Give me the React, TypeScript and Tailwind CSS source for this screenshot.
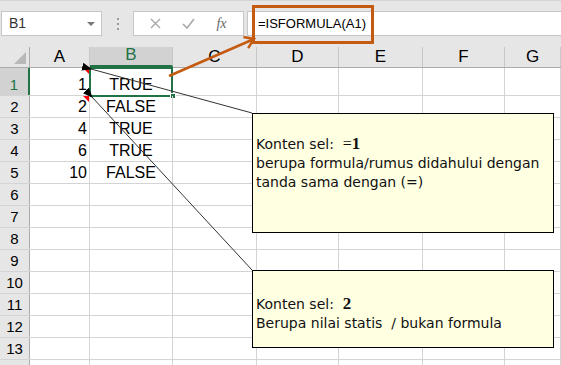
import React from 'react';

const cols = [
  { name: 'A', w: 'w-[60px]' },
  { name: 'B', w: 'w-[83px]' },
  { name: 'C', w: 'w-[84px]' },
  { name: 'D', w: 'w-[82px]' },
  { name: 'E', w: 'w-[84px]' },
  { name: 'F', w: 'w-[82px]' },
  { name: 'G', w: 'w-[56px]' },
];

const aVals = ['1', '2', '4', '6', '10'];
const bVals = ['TRUE', 'FALSE', 'TRUE', 'TRUE', 'FALSE'];

const rows = Array.from({ length: 14 }, (_, i) => i + 1);

const Toolbar = () => (
  <div className="h-[47px] bg-[#e6e6e6] border-t border-[#d4d4d4] flex items-start pt-[10px] pl-[1px]">
    <div className="w-[101px] h-[25px] bg-white border border-[#c6c6c6] flex items-center justify-between pl-[7px] pr-[6px]">
      <span className="text-[14px] text-[#333] font-['Liberation_Sans',sans-serif]">B1</span>
      <span className="w-0 h-0 border-l-[4px] border-r-[4px] border-t-[4px] border-l-transparent border-r-transparent border-t-[#777]" />
    </div>
    <div className="w-[31px] h-[25px] flex flex-col items-center justify-center gap-[3px]">
      <span className="w-[2px] h-[2px] bg-[#9a9a9a]" />
      <span className="w-[2px] h-[2px] bg-[#9a9a9a]" />
      <span className="w-[2px] h-[2px] bg-[#9a9a9a]" />
    </div>
    <div className="w-[111px] h-[25px] bg-white border border-[#c6c6c6] flex items-center justify-around px-[6px]">
      <svg width="11" height="11" viewBox="0 0 11 11">
        <path d="M1 1L10 10M10 1L1 10" stroke="#a8a8a8" strokeWidth="1.4" fill="none" />
      </svg>
      <svg width="13" height="11" viewBox="0 0 13 11">
        <path d="M1 6L5 10L12 1" stroke="#a8a8a8" strokeWidth="1.6" fill="none" />
      </svg>
      <span className="text-[14px] italic text-[#666] font-['Liberation_Serif',serif]">fx</span>
    </div>
    <div className="ml-[3px] flex-1 h-[25px] bg-white border border-[#c6c6c6] border-r-0 flex items-center pl-[10px]">
      <span className="text-[13px] text-black font-['Liberation_Sans',sans-serif]">=ISFORMULA(A1)</span>
    </div>
  </div>
);

const HeaderRow = () => (
  <div className="flex h-[21px] bg-[#e6e6e6] border-b border-[#ababab]">
    <div className="w-[30px] border-r border-[#ababab] relative">
      <svg className="absolute right-[3px] bottom-[3px]" width="12" height="12" viewBox="0 0 12 12">
        <path d="M12 0L12 12L0 12Z" fill="#b8b8b8" />
      </svg>
    </div>
    {cols.map((c) => (
      <div
        key={c.name}
        className={`${c.w} flex items-end justify-center text-[17px] leading-[20px] border-r border-[#c8c8c8] ${
          c.name === 'B' ? 'bg-[#d2d2d2] text-[#217346] border-b-2 border-b-[#217346]' : 'text-black'
        }`}
      >
        {c.name}
      </div>
    ))}
  </div>
);

const Row = ({ n }: { n: number }) => {
  const h = n === 1 ? 'h-[28px]' : 'h-[22px]';
  const sel = n === 1;
  return (
    <div className={`flex ${h} border-b border-[#d4d4d4]`}>
      <div
        className={`w-[30px] flex items-end justify-center pb-[1px] text-[15px] leading-[18px] ${
          sel ? 'bg-[#d2d2d2] text-[#217346] border-r-2 border-[#217346]' : 'bg-[#e6e6e6] text-black border-r border-[#ababab]'
        }`}
      >
        {n <= 13 ? n : ''}
      </div>
      {cols.map((c) => {
        let content: React.ReactNode = null;
        let align = 'justify-center';
        if (c.name === 'A' && n <= 5) {
          content = aVals[n - 1];
          align = 'justify-end pr-[2px]';
        }
        if (c.name === 'B' && n <= 5) content = bVals[n - 1];
        return (
          <div
            key={c.name}
            className={`${c.w} relative flex items-end ${align} pb-[1px] text-[16px] leading-[19px] text-black border-r border-[#d4d4d4]`}
          >
            {content}
            {c.name === 'A' && n <= 2 && (
              <svg className="absolute right-0 top-0" width="6" height="6" viewBox="0 0 6 6">
                <path d="M0 0L6 0L6 6Z" fill="#ff0000" />
              </svg>
            )}
            {c.name === 'B' && sel && (
              <>
                <span className="absolute left-[-1px] top-[-1px] right-[-1px] bottom-[-2px] border-2 border-[#217346]" />
                <span className="absolute right-[-4px] bottom-[-4px] w-[6px] h-[6px] bg-[#217346] border border-white" />
              </>
            )}
          </div>
        );
      })}
    </div>
  );
};

const Callout = ({ className, children }: { className: string; children: React.ReactNode }) => (
  <div
    className={`absolute left-[252px] w-[302px] bg-[#ffffe1] border border-black pl-[3px] text-[14px] leading-[19px] text-[#111] font-['DejaVu_Sans',sans-serif] ${className}`}
  >
    {children}
  </div>
);

export default function App() {
  return (
    <div className="relative w-[561px] h-[365px] overflow-hidden bg-white font-['Liberation_Sans',Arial,sans-serif]">
      <Toolbar />
      <HeaderRow />
      {rows.map((n) => (
        <Row key={n} n={n} />
      ))}

      {/* highlight around formula */}
      <div className="absolute left-[252px] top-[5px] w-[122px] h-[39px] border-[3px] border-[#c55a11]" />

      <Callout className="top-[113px] h-[120px] pt-[20px]">
        <div>
          Konten sel:&nbsp; <span className="font-['Liberation_Serif',serif] text-[16px]">=</span>
          <span className="font-['Liberation_Serif',serif] font-bold text-[17px]">1</span>
        </div>
        <div>berupa formula/rumus didahului dengan</div>
        <div>tanda sama dengan (=)</div>
      </Callout>

      <Callout className="top-[270px] h-[78px] pt-[23px]">
        <div>
          Konten sel:&nbsp; <span className="font-['Liberation_Serif',serif] font-bold text-[17px]">2</span>
        </div>
        <div>Berupa nilai statis&nbsp; / bukan formula</div>
      </Callout>

      <svg className="absolute inset-0 pointer-events-none" width="561" height="365" viewBox="0 0 561 365">
        <defs>
          <marker id="blk" markerWidth="10" markerHeight="8" refX="1" refY="4" orient="auto-start-reverse" markerUnits="userSpaceOnUse">
            <path d="M0 4L10 0L10 8Z" fill="#000" />
          </marker>
          <marker id="org" markerWidth="14" markerHeight="14" refX="11" refY="7" orient="auto" markerUnits="userSpaceOnUse">
            <path d="M2 1L11 7L2 13" stroke="#c55a11" strokeWidth="2.5" fill="none" />
          </marker>
        </defs>
        <line x1="91" y1="69" x2="252" y2="113" stroke="#333" strokeWidth="1" markerStart="url(#blk)" />
        <line x1="92" y1="97" x2="252" y2="270" stroke="#333" strokeWidth="1" markerStart="url(#blk)" />
        <line x1="169" y1="76" x2="254" y2="39" stroke="#c55a11" strokeWidth="2.5" markerEnd="url(#org)" />
      </svg>
    </div>
  );
}
